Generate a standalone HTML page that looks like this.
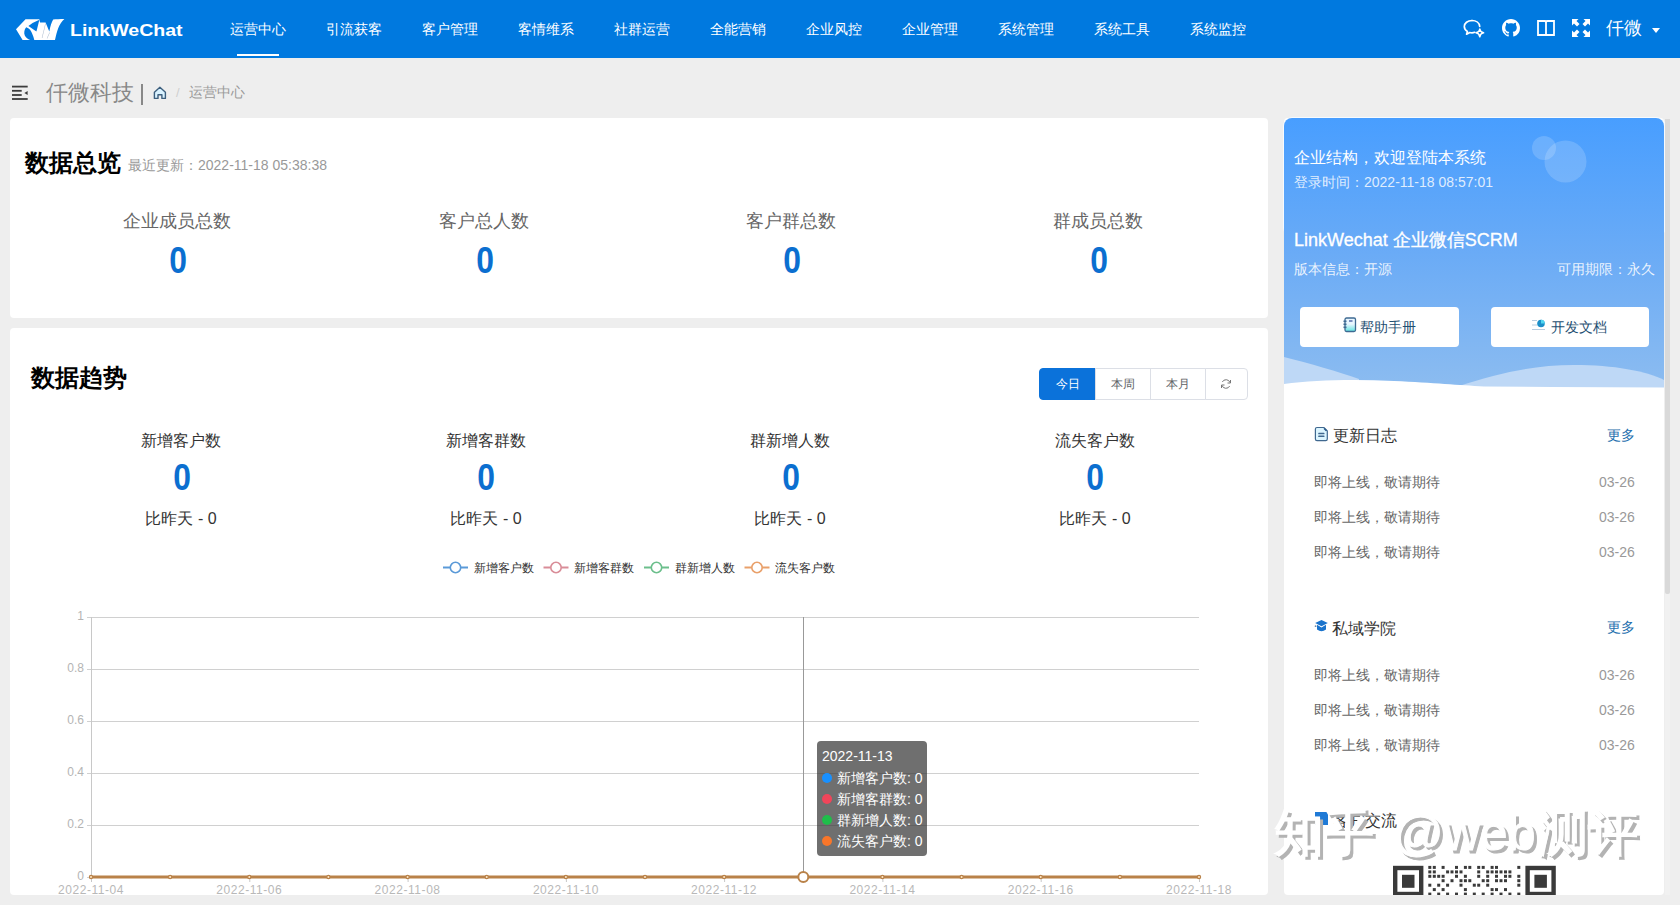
<!DOCTYPE html>
<html><head><meta charset="utf-8">
<style>
*{margin:0;padding:0;box-sizing:border-box}
html,body{width:1680px;height:905px;overflow:hidden}
body{background:#eeeeee;font-family:"Liberation Sans",sans-serif;position:relative;color:#333}
.abs{position:absolute;white-space:nowrap}
#hdr{position:absolute;left:0;top:0;width:1680px;height:58px;background:#0079df}
.nav{position:absolute;top:19px;font-size:14px;line-height:20px;color:#fff}
.card{position:absolute;background:#fff;border-radius:4px}
.lbl1{font-size:18px;line-height:20px;color:#666;text-align:center;width:200px}
.num{font-size:37px;font-weight:bold;color:#0b6fd0;text-align:center;width:200px;line-height:34px;transform:scaleX(0.86)}
.lbl2{font-size:16px;line-height:18px;color:#333;text-align:center;width:200px}
.seg{position:absolute;top:368px;height:32px;font-size:12px;line-height:30px;text-align:center;color:#606266;border:1px solid #dcdfe6;background:#fff}
.item{font-size:14px;line-height:16px;color:#666}
.date{font-size:14px;line-height:16px;color:#999}
.more{font-size:14px;line-height:16px;color:#1f6fae}
.sect{font-size:16px;line-height:18px;color:#333}
</style></head><body>
<div id="hdr"></div>
<!-- logo -->
<svg class="abs" style="left:12px;top:14px" width="56" height="30" viewBox="0 0 56 30">
<path fill="#fff" d="M4,15.2 L13.5,5.3 L27.3,5.2 L28,8.6 L33.6,8.6 L37.3,17.5 C38.3,12.5 39.6,8 41.2,5.6 C44,5.2 48,5.1 52.4,5 C50,7 47.6,10.5 46.3,14 C45,17.5 43.8,22 43,26 L10.6,26 Z"/>
<path fill="#0079df" d="M27.4,5.7 Q21,8.2 16.4,12 L24.4,17.6 Z"/>
<path fill="#0079df" d="M14.2,13.3 C12.3,15.5 11.7,19 12.8,21.6 C13.9,23.9 15.9,25.3 18.1,26.1 L22.3,26.1 C21.8,24 21.2,22 20.5,20.6 C19.7,18.6 18.9,16.9 18.1,15.8 C17,14.6 15.6,13.7 14.2,13.3 Z"/>
<path fill="#3a5f8a" d="M33.3,9.5 L29.8,24 L30.3,24 L33.8,9.5 Z" opacity="0.45"/>
<path fill="#3a5f8a" d="M37.4,18.5 L34.8,24.5 L35.3,24.5 L37.9,18.5 Z" opacity="0.45"/>
</svg>
<div class="abs" style="left:70px;top:20px;font-size:17px;line-height:22px;font-weight:bold;color:#fff;transform:scaleX(1.15);transform-origin:0 0">LinkWeChat</div>
<div class="nav" style="left:230px">运营中心</div>
<div class="abs" style="left:237px;top:54px;width:42px;height:2px;background:#fff"></div>
<div class="nav" style="left:326px">引流获客</div>
<div class="nav" style="left:422px">客户管理</div>
<div class="nav" style="left:518px">客情维系</div>
<div class="nav" style="left:614px">社群运营</div>
<div class="nav" style="left:710px">全能营销</div>
<div class="nav" style="left:806px">企业风控</div>
<div class="nav" style="left:902px">企业管理</div>
<div class="nav" style="left:998px">系统管理</div>
<div class="nav" style="left:1094px">系统工具</div>
<div class="nav" style="left:1190px">系统监控</div>
<div class="abs" style="left:1606px;top:17px;font-size:18px;line-height:22px;color:#fff">仟微</div>
<div class="abs" style="left:1652px;top:28px;width:0;height:0;border-left:4px solid transparent;border-right:4px solid transparent;border-top:5px solid #fff"></div>

<!-- breadcrumb -->
<div class="abs" style="left:46px;top:80px;font-size:22px;line-height:26px;color:#888">仟微科技</div>
<div class="abs" style="left:141px;top:84px;width:2px;height:21px;background:#888"></div>
<div class="abs" style="left:176px;top:85px;font-size:13px;line-height:16px;color:#cfcfcf">/</div>
<div class="abs" style="left:189px;top:84px;font-size:14px;line-height:16px;color:#999">运营中心</div>

<!-- card 1 -->
<div class="card" style="left:10px;top:118px;width:1258px;height:200px"></div>
<div class="abs" style="left:25px;top:149px;font-size:24px;line-height:28px;font-weight:bold;color:#000">数据总览</div>
<div class="abs" style="left:128px;top:157px;font-size:14px;line-height:16px;color:#999">最近更新：2022-11-18 05:38:38</div>

<!-- card 2 -->
<div class="card" style="left:10px;top:328px;width:1258px;height:567px"></div>
<div class="abs" style="left:31px;top:364px;font-size:24px;line-height:28px;font-weight:bold;color:#000">数据趋势</div>

<!-- right panel -->
<div class="card" style="left:1284px;top:118px;width:380px;height:777px"></div>

<!-- hamburger -->
<svg class="abs" style="left:12px;top:85px" width="17" height="16" viewBox="0 0 17 16">
<rect x="0" y="0.7" width="15.7" height="1.8" fill="#3c3c3c"/>
<rect x="0" y="4.9" width="9.7" height="1.8" fill="#3c3c3c"/>
<rect x="0" y="9.1" width="9.7" height="1.8" fill="#3c3c3c"/>
<rect x="0" y="13.1" width="15.7" height="1.8" fill="#3c3c3c"/>
<path d="M15.6,5.9 L12.4,7.9 L15.6,10.1 Z" fill="#3c3c3c"/>
</svg>
<!-- home icon -->
<svg class="abs" style="left:153px;top:86px" width="14" height="14" viewBox="0 0 14 14">
<path d="M1.4,6.2 L6.9,1.2 L12.4,6.2 L12.4,12.4 L8.9,12.4 L8.9,8.7 L5,8.7 L5,12.4 L1.4,12.4 Z" fill="#d9f2ff" stroke="#3d5f7e" stroke-width="1.4" stroke-linejoin="round"/>
</svg>
<!-- header icons -->
<svg class="abs" style="left:1463px;top:19px" width="22" height="19" viewBox="0 0 22 19">
<path d="M9,1.5 C4.6,1.5 1.3,4.2 1.3,7.6 C1.3,9.7 2.5,11.4 4.4,12.5 L3.6,15.2 L6.8,13.5 C7.5,13.7 8.2,13.8 9,13.8 C10,13.8 10.9,13.6 11.8,13.3" fill="none" stroke="#fff" stroke-width="1.7" stroke-linecap="round" stroke-linejoin="round"/>
<path d="M16.7,7.3 C16.3,4.0 13.2,1.5 9,1.5" fill="none" stroke="#fff" stroke-width="1.7" stroke-linecap="round"/>
<path d="M16.8,10 Q17.3,13.2 20.6,13.8 Q17.3,14.4 16.8,17.8 Q16.3,14.4 13,13.8 Q16.3,13.2 16.8,10 Z" fill="none" stroke="#fff" stroke-width="1.5" stroke-linejoin="round"/>
</svg>
<svg class="abs" style="left:1502px;top:19px" width="18" height="18" viewBox="0 0 16 16">
<path fill="#fff" d="M8 0C3.58 0 0 3.58 0 8c0 3.54 2.29 6.53 5.47 7.59.4.07.55-.17.55-.38 0-.19-.01-.82-.01-1.49-2.01.37-2.53-.49-2.69-.94-.09-.23-.48-.94-.82-1.13-.28-.15-.68-.52-.01-.53.63-.01 1.08.58 1.23.82.72 1.21 1.87.87 2.33.66.07-.52.28-.87.51-1.07-1.78-.2-3.64-.89-3.64-3.95 0-.87.31-1.59.82-2.15-.08-.2-.36-1.02.08-2.12 0 0 .67-.21 2.2.82.64-.18 1.32-.27 2-.27.68 0 1.36.09 2 .27 1.53-1.04 2.2-.82 2.2-.82.44 1.1.16 1.92.08 2.12.51.56.82 1.27.82 2.15 0 3.07-1.87 3.75-3.65 3.95.29.25.54.73.54 1.48 0 1.07-.01 1.93-.01 2.2 0 .21.15.46.55.38A8.013 8.013 0 0016 8c0-4.42-3.58-8-8-8z"/>
</svg>
<svg class="abs" style="left:1537px;top:20px" width="18" height="16" viewBox="0 0 18 16">
<path d="M1,1 L8,1 L9,2 L10,1 L17,1 L17,15 L10,15 L9,15.5 L8,15 L1,15 Z M9,2 L9,15" fill="none" stroke="#fff" stroke-width="1.8" stroke-linejoin="miter"/>
</svg>
<svg class="abs" style="left:1572px;top:19px" width="18" height="18" viewBox="0 0 18 18">
<path fill="#fff" d="M0,0 L6.5,0 L4.5,2 L7.5,5 L5,7.5 L2,4.5 L0,6.5 Z"/>
<path fill="#fff" d="M18,0 L18,6.5 L16,4.5 L13,7.5 L10.5,5 L13.5,2 L11.5,0 Z"/>
<path fill="#fff" d="M0,18 L0,11.5 L2,13.5 L5,10.5 L7.5,13 L4.5,16 L6.5,18 Z"/>
<path fill="#fff" d="M18,18 L11.5,18 L13.5,16 L10.5,13 L13,10.5 L16,13.5 L18,11.5 Z"/>
</svg>

<!-- card1 stats -->
<div class="abs lbl1" style="left:77px;top:211px">企业成员总数</div>
<div class="abs lbl1" style="left:384px;top:211px">客户总人数</div>
<div class="abs lbl1" style="left:691px;top:211px">客户群总数</div>
<div class="abs lbl1" style="left:998px;top:211px">群成员总数</div>
<div class="abs num" style="left:78px;top:244px">0</div>
<div class="abs num" style="left:385px;top:244px">0</div>
<div class="abs num" style="left:692px;top:244px">0</div>
<div class="abs num" style="left:999px;top:244px">0</div>

<!-- seg buttons -->
<div class="seg" style="left:1039px;width:57px;background:#0b72da;border-color:#0b72da;color:#fff;border-radius:4px 0 0 4px">今日</div>
<div class="seg" style="left:1095px;width:56px">本周</div>
<div class="seg" style="left:1150px;width:56px">本月</div>
<div class="seg" style="left:1205px;width:43px;border-radius:0 4px 4px 0"></div>
<svg class="abs" style="left:1220px;top:378px" width="12" height="12" viewBox="0 0 12 12">
<path d="M10,4.5 A4.2,4.2 0 0 0 2.3,4" fill="none" stroke="#777" stroke-width="1"/>
<path d="M2,7.5 A4.2,4.2 0 0 0 9.7,8" fill="none" stroke="#777" stroke-width="1"/>
<path d="M10.5,2 L10.5,5 L7.5,5" fill="none" stroke="#777" stroke-width="1"/>
<path d="M1.5,10 L1.5,7 L4.5,7" fill="none" stroke="#777" stroke-width="1"/>
</svg>

<!-- card2 stats -->
<div class="abs lbl2" style="left:81px;top:432px">新增客户数</div>
<div class="abs lbl2" style="left:386px;top:432px">新增客群数</div>
<div class="abs lbl2" style="left:690px;top:432px">群新增人数</div>
<div class="abs lbl2" style="left:995px;top:432px">流失客户数</div>
<div class="abs num" style="left:82px;top:461px">0</div>
<div class="abs num" style="left:386px;top:461px">0</div>
<div class="abs num" style="left:691px;top:461px">0</div>
<div class="abs num" style="left:995px;top:461px">0</div>
<div class="abs lbl2" style="left:81px;top:510px">比昨天 - 0</div>
<div class="abs lbl2" style="left:386px;top:510px">比昨天 - 0</div>
<div class="abs lbl2" style="left:690px;top:510px">比昨天 - 0</div>
<div class="abs lbl2" style="left:995px;top:510px">比昨天 - 0</div>
<svg class="abs" style="left:0;top:0" width="1680" height="905" viewBox="0 0 1680 905">
<line x1="87" y1="617.5" x2="1199" y2="617.5" stroke="#d0d0d0" stroke-width="1"/>
<text x="84" y="620.0" text-anchor="end" font-size="12" fill="#b4b4b4" font-family="Liberation Sans">1</text>
<line x1="87" y1="669.5" x2="1199" y2="669.5" stroke="#d0d0d0" stroke-width="1"/>
<text x="84" y="672.0" text-anchor="end" font-size="12" fill="#b4b4b4" font-family="Liberation Sans">0.8</text>
<line x1="87" y1="721.5" x2="1199" y2="721.5" stroke="#d0d0d0" stroke-width="1"/>
<text x="84" y="724.0" text-anchor="end" font-size="12" fill="#b4b4b4" font-family="Liberation Sans">0.6</text>
<line x1="87" y1="773.5" x2="1199" y2="773.5" stroke="#d0d0d0" stroke-width="1"/>
<text x="84" y="776.0" text-anchor="end" font-size="12" fill="#b4b4b4" font-family="Liberation Sans">0.4</text>
<line x1="87" y1="825.5" x2="1199" y2="825.5" stroke="#d0d0d0" stroke-width="1"/>
<text x="84" y="828.0" text-anchor="end" font-size="12" fill="#b4b4b4" font-family="Liberation Sans">0.2</text>
<line x1="87" y1="877.5" x2="1199" y2="877.5" stroke="#d0d0d0" stroke-width="1"/>
<text x="84" y="880.0" text-anchor="end" font-size="12" fill="#b4b4b4" font-family="Liberation Sans">0</text>
<line x1="91.5" y1="617" x2="91.5" y2="882" stroke="#c8c8c8" stroke-width="1"/>
<line x1="91.5" y1="877" x2="91.5" y2="882" stroke="#c8c8c8" stroke-width="1"/>
<text x="91.0" y="894" text-anchor="middle" font-size="12" letter-spacing="0.55" fill="#b8b8b8" font-family="Liberation Sans">2022-11-04</text>
<line x1="249.8" y1="877" x2="249.8" y2="882" stroke="#c8c8c8" stroke-width="1"/>
<text x="249.3" y="894" text-anchor="middle" font-size="12" letter-spacing="0.55" fill="#b8b8b8" font-family="Liberation Sans">2022-11-06</text>
<line x1="408.1" y1="877" x2="408.1" y2="882" stroke="#c8c8c8" stroke-width="1"/>
<text x="407.6" y="894" text-anchor="middle" font-size="12" letter-spacing="0.55" fill="#b8b8b8" font-family="Liberation Sans">2022-11-08</text>
<line x1="566.4" y1="877" x2="566.4" y2="882" stroke="#c8c8c8" stroke-width="1"/>
<text x="565.9" y="894" text-anchor="middle" font-size="12" letter-spacing="0.55" fill="#b8b8b8" font-family="Liberation Sans">2022-11-10</text>
<line x1="724.6" y1="877" x2="724.6" y2="882" stroke="#c8c8c8" stroke-width="1"/>
<text x="724.1" y="894" text-anchor="middle" font-size="12" letter-spacing="0.55" fill="#b8b8b8" font-family="Liberation Sans">2022-11-12</text>
<line x1="882.9" y1="877" x2="882.9" y2="882" stroke="#c8c8c8" stroke-width="1"/>
<text x="882.4" y="894" text-anchor="middle" font-size="12" letter-spacing="0.55" fill="#b8b8b8" font-family="Liberation Sans">2022-11-14</text>
<line x1="1041.2" y1="877" x2="1041.2" y2="882" stroke="#c8c8c8" stroke-width="1"/>
<text x="1040.7" y="894" text-anchor="middle" font-size="12" letter-spacing="0.55" fill="#b8b8b8" font-family="Liberation Sans">2022-11-16</text>
<line x1="1199.5" y1="877" x2="1199.5" y2="882" stroke="#c8c8c8" stroke-width="1"/>
<text x="1199.0" y="894" text-anchor="middle" font-size="12" letter-spacing="0.55" fill="#b8b8b8" font-family="Liberation Sans">2022-11-18</text>
<line x1="803.5" y1="617" x2="803.5" y2="877" stroke="#999" stroke-width="1"/>
<line x1="91" y1="877" x2="1199" y2="877" stroke="#b98249" stroke-width="3"/>
<circle cx="91.0" cy="877" r="1.6" fill="#fde6c6" stroke="#b98249" stroke-width="1.2"/>
<circle cx="170.1" cy="877" r="1.6" fill="#fde6c6" stroke="#b98249" stroke-width="1.2"/>
<circle cx="249.3" cy="877" r="1.6" fill="#fde6c6" stroke="#b98249" stroke-width="1.2"/>
<circle cx="328.4" cy="877" r="1.6" fill="#fde6c6" stroke="#b98249" stroke-width="1.2"/>
<circle cx="407.6" cy="877" r="1.6" fill="#fde6c6" stroke="#b98249" stroke-width="1.2"/>
<circle cx="486.7" cy="877" r="1.6" fill="#fde6c6" stroke="#b98249" stroke-width="1.2"/>
<circle cx="565.9" cy="877" r="1.6" fill="#fde6c6" stroke="#b98249" stroke-width="1.2"/>
<circle cx="645.0" cy="877" r="1.6" fill="#fde6c6" stroke="#b98249" stroke-width="1.2"/>
<circle cx="724.1" cy="877" r="1.6" fill="#fde6c6" stroke="#b98249" stroke-width="1.2"/>
<circle cx="882.4" cy="877" r="1.6" fill="#fde6c6" stroke="#b98249" stroke-width="1.2"/>
<circle cx="961.6" cy="877" r="1.6" fill="#fde6c6" stroke="#b98249" stroke-width="1.2"/>
<circle cx="1040.7" cy="877" r="1.6" fill="#fde6c6" stroke="#b98249" stroke-width="1.2"/>
<circle cx="1119.9" cy="877" r="1.6" fill="#fde6c6" stroke="#b98249" stroke-width="1.2"/>
<circle cx="1199.0" cy="877" r="1.6" fill="#fde6c6" stroke="#b98249" stroke-width="1.2"/>
<circle cx="803.3" cy="877" r="5" fill="#fff" stroke="#b98249" stroke-width="2"/>
<line x1="443.0" y1="567.5" x2="468.0" y2="567.5" stroke="#5b9ad8" stroke-width="2"/>
<circle cx="455.5" cy="567.5" r="5.2" fill="#fff" stroke="#5b9ad8" stroke-width="1.6"/>
<text x="473.5" y="571.5" font-size="12" fill="#333" font-family="Liberation Sans">新增客户数</text>
<line x1="543.5" y1="567.5" x2="568.5" y2="567.5" stroke="#d98d98" stroke-width="2"/>
<circle cx="556.0" cy="567.5" r="5.2" fill="#fff" stroke="#d98d98" stroke-width="1.6"/>
<text x="574.0" y="571.5" font-size="12" fill="#333" font-family="Liberation Sans">新增客群数</text>
<line x1="644.0" y1="567.5" x2="669.0" y2="567.5" stroke="#6cbf8c" stroke-width="2"/>
<circle cx="656.5" cy="567.5" r="5.2" fill="#fff" stroke="#6cbf8c" stroke-width="1.6"/>
<text x="674.5" y="571.5" font-size="12" fill="#333" font-family="Liberation Sans">群新增人数</text>
<line x1="744.5" y1="567.5" x2="769.5" y2="567.5" stroke="#e9a06a" stroke-width="2"/>
<circle cx="757.0" cy="567.5" r="5.2" fill="#fff" stroke="#e9a06a" stroke-width="1.6"/>
<text x="775.0" y="571.5" font-size="12" fill="#333" font-family="Liberation Sans">流失客户数</text>
</svg>
<div class="abs" style="left:817px;top:741px;width:110px;height:115px;background:rgba(50,50,50,0.7);border-radius:4px"></div>
<div class="abs" style="left:822px;top:747px;font-size:14px;line-height:18px;color:#fff">2022-11-13</div>
<div class="abs" style="left:822px;top:773px;width:10px;height:10px;border-radius:5px;background:#1890ff"></div>
<div class="abs" style="left:837px;top:769px;font-size:14px;line-height:18px;color:#fff">新增客户数: 0</div>
<div class="abs" style="left:822px;top:794px;width:10px;height:10px;border-radius:5px;background:#f0455a"></div>
<div class="abs" style="left:837px;top:790px;font-size:14px;line-height:18px;color:#fff">新增客群数: 0</div>
<div class="abs" style="left:822px;top:815px;width:10px;height:10px;border-radius:5px;background:#1fbe4a"></div>
<div class="abs" style="left:837px;top:811px;font-size:14px;line-height:18px;color:#fff">群新增人数: 0</div>
<div class="abs" style="left:822px;top:836px;width:10px;height:10px;border-radius:5px;background:#f8762a"></div>
<div class="abs" style="left:837px;top:832px;font-size:14px;line-height:18px;color:#fff">流失客户数: 0</div>

<!-- right top blue card -->
<div class="abs" style="left:1282.5px;top:116.5px;width:383px;height:120px;background:#f7fbff;border-radius:9.5px"></div>
<svg class="abs" style="left:1284px;top:118px" width="380" height="271" viewBox="0 0 380 271">
<defs><linearGradient id="bg" x1="0" y1="0" x2="0" y2="1">
<stop offset="0" stop-color="#489eff"/><stop offset="0.5" stop-color="#6aabf6"/><stop offset="1" stop-color="#8cbcf0"/></linearGradient></defs>
<path d="M0,8 A8,8 0 0 1 8,0 L372,0 A8,8 0 0 1 380,8 L380,270 L0,270 Z" fill="url(#bg)"/>
<circle cx="260" cy="30" r="12" fill="#fff" fill-opacity="0.17"/>
<circle cx="281.5" cy="43.5" r="21" fill="#fff" fill-opacity="0.17"/>
<path d="M0,239 C25,245 55,254 75,261 L75,270 L0,270 Z" fill="#bed8f6"/>
<path d="M175,268 C215,255 250,247 290,247 C330,247 362,253 380,262 L380,270 L175,270 Z" fill="#bed8f6"/>
<path d="M0,266 C30,262 70,261 110,263 C150,265 175,267 200,268.5 L380,270 L380,271 L0,271 Z" fill="#fff"/>
<rect x="0" y="269.5" width="380" height="2" fill="#fff"/>
</svg>
<div class="abs" style="left:1294px;top:148px;font-size:16px;line-height:20px;color:#fff">企业结构，欢迎登陆本系统</div>
<div class="abs" style="left:1294px;top:173px;font-size:14px;line-height:18px;color:rgba(255,255,255,0.82)">登录时间：2022-11-18 08:57:01</div>
<div class="abs" style="left:1294px;top:229px;font-size:18px;line-height:22px;color:#fff;-webkit-text-stroke:0.3px #fff">LinkWechat 企业微信SCRM</div>
<div class="abs" style="left:1294px;top:260px;font-size:14px;line-height:18px;color:rgba(255,255,255,0.88)">版本信息：开源</div>
<div class="abs" style="left:1557px;top:260px;font-size:14px;line-height:18px;color:rgba(255,255,255,0.88)">可用期限：永久</div>
<div class="abs" style="left:1300px;top:307px;width:159px;height:40px;background:#fff;border-radius:4px"></div>
<div class="abs" style="left:1491px;top:307px;width:158px;height:40px;background:#fff;border-radius:4px"></div>
<svg class="abs" style="left:1343px;top:317px" width="14" height="16" viewBox="0 0 14 16">
<defs><linearGradient id="bk" x1="0" y1="0" x2="0" y2="1"><stop offset="0.45" stop-color="#e8f6ff"/><stop offset="1" stop-color="#5fe3e0"/></linearGradient></defs>
<rect x="2" y="1" width="10.5" height="13.5" rx="1.5" fill="url(#bk)" stroke="#3e6a92" stroke-width="1.3"/>
<rect x="0.5" y="3.5" width="3" height="1.6" fill="#3e6a92"/><rect x="0.5" y="6.5" width="3" height="1.6" fill="#3e6a92"/><rect x="0.5" y="9.5" width="3" height="1.6" fill="#3e6a92"/>
<rect x="6" y="3" width="3.5" height="2" fill="#7a8fc0"/>
</svg>
<div class="abs" style="left:1360px;top:318px;font-size:14px;line-height:18px;color:#1f4f72">帮助手册</div>
<svg class="abs" style="left:1531px;top:318px" width="16" height="14" viewBox="0 0 16 14">
<rect x="1" y="2" width="5" height="1" fill="#b8cde0"/><rect x="1" y="6.5" width="5" height="1" fill="#b8cde0"/><rect x="1" y="11" width="13" height="1" fill="#b8cde0"/>
<circle cx="10" cy="5.5" r="3.8" fill="#1b8fc9"/><path d="M10,1.7 A3.8,3.8 0 0 1 13.8,5.5 L10,5.5 Z" fill="#4fd6f0"/>
</svg>
<div class="abs" style="left:1551px;top:318px;font-size:14px;line-height:18px;color:#1f4f72">开发文档</div>

<!-- right lower panel content -->
<svg class="abs" style="left:1314px;top:426px" width="15" height="16" viewBox="0 0 15 16">
<path d="M3,1.5 L9.8,1.5 L13.3,5 L13.3,13 Q13.3,14.6 11.7,14.6 L3,14.6 Q1.4,14.6 1.4,13 L1.4,3.1 Q1.4,1.5 3,1.5 Z" fill="#dcf5ff" stroke="#40688f" stroke-width="1.2" stroke-linejoin="round"/>
<path d="M10.2,2.5 L12.4,4.7" stroke="#2a5a8a" stroke-width="1.6"/>
<rect x="4.2" y="6.8" width="6.3" height="1.5" rx="0.6" fill="#40688f"/><rect x="4.2" y="9.6" width="6.3" height="1.5" rx="0.6" fill="#40688f"/>
</svg>
<div class="abs sect" style="left:1333px;top:427px">更新日志</div>
<div class="abs more" style="left:1607px;top:427px">更多</div>
<div class="abs item" style="left:1314px;top:474px">即将上线，敬请期待</div><div class="abs date" style="left:1599px;top:474px">03-26</div>
<div class="abs item" style="left:1314px;top:509px">即将上线，敬请期待</div><div class="abs date" style="left:1599px;top:509px">03-26</div>
<div class="abs item" style="left:1314px;top:544px">即将上线，敬请期待</div><div class="abs date" style="left:1599px;top:544px">03-26</div>

<svg class="abs" style="left:1313px;top:619px" width="16" height="14" viewBox="0 0 16 14">
<path d="M8.5,1 L14.8,3.9 L8.5,7.2 L2.2,3.9 Z" fill="#1a73cc"/>
<path d="M4,5.8 L4,10.5 Q8.5,13.8 13,10.5 L13,5.8 L8.5,8.6 Z" fill="#1a73cc"/>
<circle cx="2.6" cy="7.2" r="0.9" fill="#6f8aa3"/>
</svg>
<div class="abs sect" style="left:1332px;top:620px">私域学院</div>
<div class="abs more" style="left:1607px;top:619px">更多</div>
<div class="abs item" style="left:1314px;top:667px">即将上线，敬请期待</div><div class="abs date" style="left:1599px;top:667px">03-26</div>
<div class="abs item" style="left:1314px;top:702px">即将上线，敬请期待</div><div class="abs date" style="left:1599px;top:702px">03-26</div>
<div class="abs item" style="left:1314px;top:737px">即将上线，敬请期待</div><div class="abs date" style="left:1599px;top:737px">03-26</div>

<div class="abs" style="left:1315px;top:812px;width:13px;height:13px;background:#1f7ad6"></div>
<div class="abs sect" style="left:1333px;top:812px">客户交流</div>

<!-- scrollbar -->
<div class="abs" style="left:1665px;top:119px;width:5px;height:776px;background:#f1f1f1"></div>
<div class="abs" style="left:1665px;top:119px;width:5px;height:475px;background:#d9d9d9;border-radius:0 0 2px 2px"></div>

<svg class="abs" style="left:1380px;top:860px" width="190" height="35" viewBox="0 0 190 35">
<rect x="15.2" y="8" width="26" height="26" fill="none" stroke="#3a3a3a" stroke-width="4.4"/><rect x="22" y="14.8" width="12.5" height="13" fill="#3a3a3a"/>
<rect x="147.6" y="8" width="26" height="26" fill="none" stroke="#3a3a3a" stroke-width="4.4"/><rect x="154.4" y="14.8" width="12.5" height="13" fill="#3a3a3a"/>
<rect x="48.3" y="5.9" width="3" height="3" fill="#3a3a3a"/>
<rect x="52.8" y="5.9" width="3" height="3" fill="#3a3a3a"/>
<rect x="61.6" y="5.9" width="3" height="3" fill="#3a3a3a"/>
<rect x="75.0" y="5.9" width="3" height="3" fill="#3a3a3a"/>
<rect x="83.9" y="5.9" width="3" height="3" fill="#3a3a3a"/>
<rect x="88.3" y="5.9" width="3" height="3" fill="#3a3a3a"/>
<rect x="97.2" y="5.9" width="3" height="3" fill="#3a3a3a"/>
<rect x="101.7" y="5.9" width="3" height="3" fill="#3a3a3a"/>
<rect x="110.6" y="5.9" width="3" height="3" fill="#3a3a3a"/>
<rect x="115.0" y="5.9" width="3" height="3" fill="#3a3a3a"/>
<rect x="137.3" y="5.9" width="3" height="3" fill="#3a3a3a"/>
<rect x="48.3" y="10.4" width="3" height="3" fill="#3a3a3a"/>
<rect x="52.8" y="10.4" width="3" height="3" fill="#3a3a3a"/>
<rect x="66.1" y="10.4" width="3" height="3" fill="#3a3a3a"/>
<rect x="70.5" y="10.4" width="3" height="3" fill="#3a3a3a"/>
<rect x="75.0" y="10.4" width="3" height="3" fill="#3a3a3a"/>
<rect x="79.5" y="10.4" width="3" height="3" fill="#3a3a3a"/>
<rect x="97.2" y="10.4" width="3" height="3" fill="#3a3a3a"/>
<rect x="106.2" y="10.4" width="3" height="3" fill="#3a3a3a"/>
<rect x="110.6" y="10.4" width="3" height="3" fill="#3a3a3a"/>
<rect x="115.0" y="10.4" width="3" height="3" fill="#3a3a3a"/>
<rect x="119.5" y="10.4" width="3" height="3" fill="#3a3a3a"/>
<rect x="124.0" y="10.4" width="3" height="3" fill="#3a3a3a"/>
<rect x="128.4" y="10.4" width="3" height="3" fill="#3a3a3a"/>
<rect x="48.3" y="14.8" width="3" height="3" fill="#3a3a3a"/>
<rect x="52.8" y="14.8" width="3" height="3" fill="#3a3a3a"/>
<rect x="57.2" y="14.8" width="3" height="3" fill="#3a3a3a"/>
<rect x="61.6" y="14.8" width="3" height="3" fill="#3a3a3a"/>
<rect x="75.0" y="14.8" width="3" height="3" fill="#3a3a3a"/>
<rect x="83.9" y="14.8" width="3" height="3" fill="#3a3a3a"/>
<rect x="97.2" y="14.8" width="3" height="3" fill="#3a3a3a"/>
<rect x="106.2" y="14.8" width="3" height="3" fill="#3a3a3a"/>
<rect x="115.0" y="14.8" width="3" height="3" fill="#3a3a3a"/>
<rect x="124.0" y="14.8" width="3" height="3" fill="#3a3a3a"/>
<rect x="128.4" y="14.8" width="3" height="3" fill="#3a3a3a"/>
<rect x="137.3" y="14.8" width="3" height="3" fill="#3a3a3a"/>
<rect x="61.6" y="19.2" width="3" height="3" fill="#3a3a3a"/>
<rect x="70.5" y="19.2" width="3" height="3" fill="#3a3a3a"/>
<rect x="79.5" y="19.2" width="3" height="3" fill="#3a3a3a"/>
<rect x="83.9" y="19.2" width="3" height="3" fill="#3a3a3a"/>
<rect x="88.3" y="19.2" width="3" height="3" fill="#3a3a3a"/>
<rect x="101.7" y="19.2" width="3" height="3" fill="#3a3a3a"/>
<rect x="106.2" y="19.2" width="3" height="3" fill="#3a3a3a"/>
<rect x="115.0" y="19.2" width="3" height="3" fill="#3a3a3a"/>
<rect x="119.5" y="19.2" width="3" height="3" fill="#3a3a3a"/>
<rect x="124.0" y="19.2" width="3" height="3" fill="#3a3a3a"/>
<rect x="137.3" y="19.2" width="3" height="3" fill="#3a3a3a"/>
<rect x="48.3" y="23.7" width="3" height="3" fill="#3a3a3a"/>
<rect x="57.2" y="23.7" width="3" height="3" fill="#3a3a3a"/>
<rect x="66.1" y="23.7" width="3" height="3" fill="#3a3a3a"/>
<rect x="79.5" y="23.7" width="3" height="3" fill="#3a3a3a"/>
<rect x="92.8" y="23.7" width="3" height="3" fill="#3a3a3a"/>
<rect x="97.2" y="23.7" width="3" height="3" fill="#3a3a3a"/>
<rect x="106.2" y="23.7" width="3" height="3" fill="#3a3a3a"/>
<rect x="137.3" y="23.7" width="3" height="3" fill="#3a3a3a"/>
<rect x="52.8" y="28.1" width="3" height="3" fill="#3a3a3a"/>
<rect x="61.6" y="28.1" width="3" height="3" fill="#3a3a3a"/>
<rect x="83.9" y="28.1" width="3" height="3" fill="#3a3a3a"/>
<rect x="110.6" y="28.1" width="3" height="3" fill="#3a3a3a"/>
<rect x="115.0" y="28.1" width="3" height="3" fill="#3a3a3a"/>
<rect x="124.0" y="28.1" width="3" height="3" fill="#3a3a3a"/>
<rect x="48.3" y="32.6" width="3" height="3" fill="#3a3a3a"/>
<rect x="57.2" y="32.6" width="3" height="3" fill="#3a3a3a"/>
<rect x="66.1" y="32.6" width="3" height="3" fill="#3a3a3a"/>
<rect x="75.0" y="32.6" width="3" height="3" fill="#3a3a3a"/>
<rect x="83.9" y="32.6" width="3" height="3" fill="#3a3a3a"/>
<rect x="92.8" y="32.6" width="3" height="3" fill="#3a3a3a"/>
<rect x="101.7" y="32.6" width="3" height="3" fill="#3a3a3a"/>
<rect x="110.6" y="32.6" width="3" height="3" fill="#3a3a3a"/>
<rect x="119.5" y="32.6" width="3" height="3" fill="#3a3a3a"/>
<rect x="128.4" y="32.6" width="3" height="3" fill="#3a3a3a"/>
<rect x="137.3" y="32.6" width="3" height="3" fill="#3a3a3a"/>
</svg>
<div class="abs" style="left:1277px;top:806px;font-size:50px;line-height:60px;font-weight:bold;color:#b3b3b3">知乎</div>
<div class="abs" style="left:1396px;top:806px;font-size:50px;line-height:60px;color:#b3b3b3;-webkit-text-stroke:1px #b3b3b3">@web</div>
<div class="abs" style="left:1541px;top:806px;font-size:50px;line-height:60px;font-weight:bold;color:#b3b3b3">测评</div>
<div class="abs" style="left:1274px;top:803px;font-size:50px;line-height:60px;font-weight:bold;color:#fff">知乎</div>
<div class="abs" style="left:1393px;top:803px;font-size:50px;line-height:60px;color:#fff;-webkit-text-stroke:1px #fff">@web</div>
<div class="abs" style="left:1538px;top:803px;font-size:50px;line-height:60px;font-weight:bold;color:#fff">测评</div>
</body></html>
